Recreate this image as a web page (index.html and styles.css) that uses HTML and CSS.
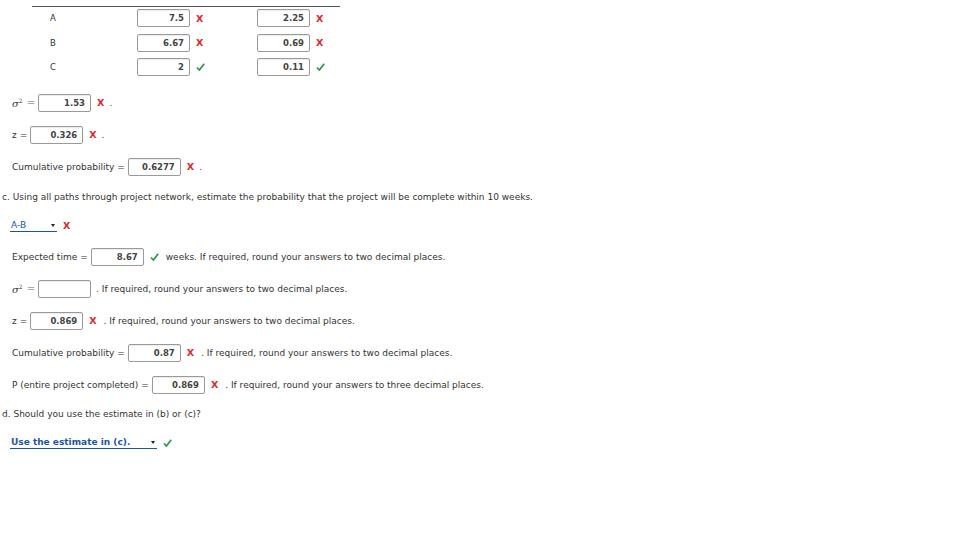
FILE: index.html
```html
<!DOCTYPE html>
<html>
<head>
<meta charset="utf-8">
<link rel="stylesheet" href="styles.css">
</head>
<body>
<div class="page">
  <div class="table">
    <div class="rule"></div>
    <div class="trow"><span class="lab">A</span><span class="c1"><span class="box">7.5</span><span class="x">X</span></span><span class="c2"><span class="box">2.25</span><span class="x">X</span></span></div>
    <div class="trow"><span class="lab">B</span><span class="c1"><span class="box">6.67</span><span class="x">X</span></span><span class="c2"><span class="box">0.69</span><span class="x">X</span></span></div>
    <div class="trow"><span class="lab">C</span><span class="c1"><span class="box">2</span><svg class="ok" viewBox="0 0 9 8" width="9" height="8"><path d="M1 4.5 L3.4 7 L8.2 0.8" fill="none" stroke="#2e9a4e" stroke-width="1.8"/></svg></span><span class="c2"><span class="box">0.11</span><svg class="ok" viewBox="0 0 9 8" width="9" height="8"><path d="M1 4.5 L3.4 7 L8.2 0.8" fill="none" stroke="#2e9a4e" stroke-width="1.8"/></svg></span></div>
  </div>

  <div class="line l1"><span class="sig">σ<sup>2</sup></span><span class="eq">=</span><span class="box">1.53</span><span class="x">X</span><span class="dot">.</span></div>
  <div class="line"><span class="z">z</span><span class="eqz">=</span><span class="box">0.326</span><span class="x">X</span><span class="dot">.</span></div>
  <div class="line"><span class="txt">Cumulative probability</span><span class="eqz">=</span><span class="box">0.6277</span><span class="x">X</span><span class="dot">.</span></div>

  <div class="q">c. Using all paths through project network, estimate the probability that the project will be complete within 10 weeks.</div>

  <div class="line sel-line"><span class="sel w1">A-B<span class="arr"></span></span><span class="x">X</span></div>

  <div class="line after-sel"><span class="txt">Expected time</span><span class="eqz">=</span><span class="box">8.67</span><svg class="ok" viewBox="0 0 9 8" width="9" height="8"><path d="M1 4.5 L3.4 7 L8.2 0.8" fill="none" stroke="#2e9a4e" stroke-width="1.8"/></svg><span class="tail">weeks. If required, round your answers to two decimal places.</span></div>
  <div class="line"><span class="sig">σ<sup>2</sup></span><span class="eq">=</span><span class="box"></span><span class="tail t2">. If required, round your answers to two decimal places.</span></div>
  <div class="line"><span class="z">z</span><span class="eqz">=</span><span class="box">0.869</span><span class="x">X</span><span class="tail">. If required, round your answers to two decimal places.</span></div>
  <div class="line"><span class="txt">Cumulative probability</span><span class="eqz">=</span><span class="box">0.87</span><span class="x">X</span><span class="tail">. If required, round your answers to two decimal places.</span></div>
  <div class="line"><span class="txt">P (entire project completed)</span><span class="eqz">=</span><span class="box">0.869</span><span class="x">X</span><span class="tail">. If required, round your answers to three decimal places.</span></div>

  <div class="q qd">d. Should you use the estimate in (b) or (c)?</div>

  <div class="line sel-line2"><span class="sel w2 bold">Use the estimate in (c).<span class="arr"></span></span><svg class="ok" viewBox="0 0 9 8" width="9" height="8"><path d="M1 4.5 L3.4 7 L8.2 0.8" fill="none" stroke="#2e9a4e" stroke-width="1.8"/></svg></div>
</div>
</body>
</html>
```

FILE: styles.css
```css
html, body {
  margin: 0;
  padding: 0;
  background: #ffffff;
}
.page {
  font-family: "DejaVu Sans", Verdana, sans-serif;
  font-size: 9px;
  color: #333333;
  padding-left: 2px;
}
.table {
  margin-left: 30px;
  width: 308px;
  font-size: 8.5px;
}
.rule {
  height: 1px;
  background: #555555;
  margin-top: 6px;
}
.trow {
  display: flex;
  align-items: center;
  height: 24.5px;
}
.rule + .trow { margin-top: -1px; }
.lab {
  width: 105px;
  padding-left: 18px;
  box-sizing: border-box;
}
.c1 {
  display: flex;
  align-items: center;
  width: 120px;
}
.c2 {
  display: flex;
  align-items: center;
}
.box {
  display: inline-block;
  box-sizing: border-box;
  width: 53px;
  height: 18px;
  line-height: 16px;
  border: 1px solid #9a9a9a;
  border-radius: 2px;
  text-align: right;
  padding-right: 5px;
  font-family: "DejaVu Sans", Verdana, sans-serif;
  font-weight: bold;
  font-size: 8.5px;
  color: #444444;
  background: #fff;
  box-shadow: inset 0 1px 1px rgba(0,0,0,0.08);
}
.x {
  color: #e0252a;
  font-weight: bold;
  font-size: 9.5px;
  margin-left: 6px;
}
.ok {
  display: inline-block;
  margin-left: 6px;
}
.dot {
  margin-left: 5px;
}
.line {
  display: flex;
  align-items: center;
  height: 18px;
  margin-left: 10px;
  margin-top: 14px;
}
.l1 { margin-top: 14px; }
.after-sel { margin-top: 15px; }
.sig {
  font-family: "DejaVu Serif", serif;
  font-style: italic;
  font-size: 10px;
  color: #333;
}
.sig sup {
  font-size: 6px;
  font-style: normal;
  vertical-align: 4px;
}
.eq {
  color: #aaaaaa;
  margin-left: 4px;
  margin-right: 3px;
  font-size: 10px;
}
.eqz {
  margin-left: 3px;
  margin-right: 3px;
}
.tail {
  margin-left: 7px;
}
.t2 { margin-left: 5px; }
.q {
  margin-top: 14px;
  height: 14px;
  line-height: 14px;
}
.qd { margin-top: 13px; }
.sel-line { margin-top: 15px; height: 14px; margin-left: 8px; }
.sel-line2 { margin-top: 15px; height: 14px; margin-left: 8px; }
.sel {
  position: relative;
  display: inline-block;
  color: #1a55a5;
  border-bottom: 1px solid #1a55a5;
  line-height: 11px;
  padding-left: 1px;
  box-sizing: border-box;
}
.w1 { width: 47px; }
.w2 { width: 147px; }
.bold {
  font-weight: bold;
  font-size: 9px;
}
.arr {
  position: absolute;
  right: 2px;
  top: 4px;
  width: 0;
  height: 0;
  border-left: 2.5px solid transparent;
  border-right: 2.5px solid transparent;
  border-top: 3px solid #222;
}
```
